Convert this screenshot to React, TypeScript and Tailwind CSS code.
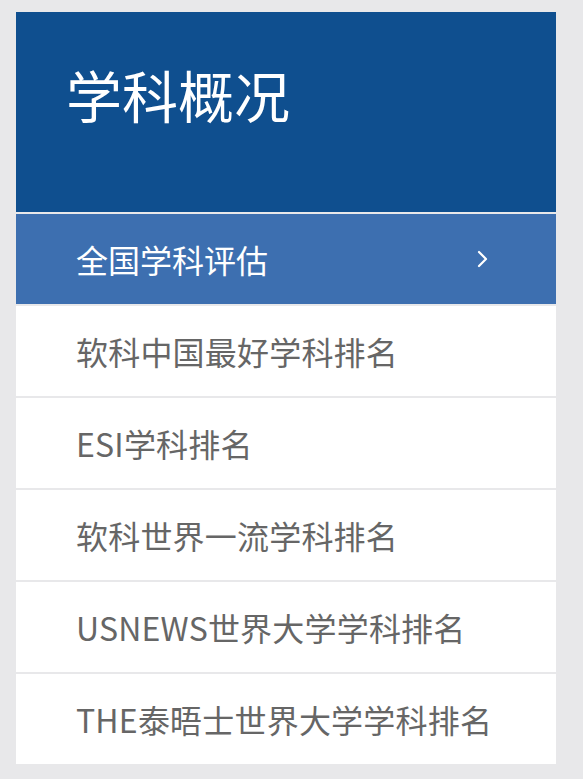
import React from "react";

const items = [
  "软科中国最好学科排名",
  "ESI学科排名",
  "软科世界一流学科排名",
  "USNEWS世界大学学科排名",
  "THE泰晤士世界大学学科排名",
];

export default function App() {
  return (
    <div
      className="min-h-[779px] w-full bg-[#e8e8ea] pt-[12px] pl-[16px]"
      style={{ fontFamily: '"Noto Sans CJK SC", "Noto Sans", sans-serif' }}
    >
      <div className="flex w-[540px] flex-col gap-[2px]">
        <div className="flex h-[200px] items-start bg-[#0f4f8f] pl-[50px] pt-[45px]">
          <h1 className="text-[56px] leading-[74px] font-normal text-white">学科概况</h1>
        </div>
        <div className="flex h-[90px] items-center justify-between bg-[#3d6fb0] pl-[60px] pr-[66px]">
          <span className="text-[32px] leading-none text-white">全国学科评估</span>
          <svg width="14" height="18" viewBox="0 0 14 18" fill="none">
            <path d="M3 2 L10 9 L3 16" stroke="white" strokeWidth="2.2" strokeLinecap="round" strokeLinejoin="round" />
          </svg>
        </div>
        {items.map((t) => (
          <div key={t} className="flex h-[90px] items-center bg-white pl-[60px]">
            <span className="text-[32px] leading-none text-[#666666] tracking-[0.2px]">{t}</span>
          </div>
        ))}
      </div>
    </div>
  );
}
